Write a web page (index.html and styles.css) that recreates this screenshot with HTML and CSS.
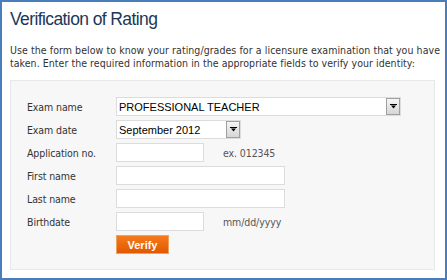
FILE: index.html
```html
<!DOCTYPE html>
<html>
<head>
<meta charset="utf-8">
<title>Verification of Rating</title>
<link rel="stylesheet" href="styles.css">
</head>
<body>
<div class="frame">
  <h1 class="title">Verification of Rating</h1>
  <p class="desc">Use the form below to know your rating/grades for a licensure examination that you have taken. Enter the required information in the appropriate fields to verify your identity:</p>
  <div class="formbox">
    <div class="grid">
      <div class="label">Exam name</div>
      <div class="ctrl">
        <div class="select select-wide">
          <span class="sel-text">PROFESSIONAL TEACHER</span>
          <span class="sel-btn"><svg width="7" height="5" viewBox="0 0 7 5"><path d="M0 0h7v1H0z M1 1.5h5L3.5 4.5z" fill="#000"/></svg></span>
        </div>
      </div>
      <div class="label">Exam date</div>
      <div class="ctrl">
        <div class="select select-date">
          <span class="sel-text">September 2012</span>
          <span class="sel-btn"><svg width="7" height="5" viewBox="0 0 7 5"><path d="M0 0h7v1H0z M1 1.5h5L3.5 4.5z" fill="#000"/></svg></span>
        </div>
      </div>
      <div class="label">Application no.</div>
      <div class="ctrl">
        <div class="input input-short"></div>
        <span class="hint">ex. 012345</span>
      </div>
      <div class="label">First name</div>
      <div class="ctrl"><div class="input input-long"></div></div>
      <div class="label">Last name</div>
      <div class="ctrl"><div class="input input-long"></div></div>
      <div class="label">Birthdate</div>
      <div class="ctrl">
        <div class="input input-short"></div>
        <span class="hint">mm/dd/yyyy</span>
      </div>
      <div class="label"></div>
      <div class="ctrl"><button class="btn">Verify</button></div>
    </div>
  </div>
</div>
</body>
</html>
```
FILE: styles.css
```css
html, body {
  margin: 0;
  padding: 0;
  background: #fff;
}
.frame {
  width: 447px;
  height: 280px;
  box-sizing: border-box;
  border: 2px solid #4a7ebb;
  padding: 5px 0 0 8px;
  font-family: "DejaVu Sans Condensed", "DejaVu Sans", sans-serif;
  font-stretch: condensed;
  color: #333;
  overflow: hidden;
}
.title {
  margin: 0;
  font-family: "Liberation Sans", Arial, sans-serif;
  font-stretch: normal;
  font-size: 17.5px;
  line-height: 24px;
  font-weight: normal;
  letter-spacing: -0.6px;
  color: #1b3858;
  white-space: nowrap;
}
.desc {
  margin: 13px 0 0;
  width: 430px;
  font-size: 10.5px;
  line-height: 13px;
  letter-spacing: 0.05px;
  text-align: justify;
  color: #333;
}
.formbox {
  margin-top: 10px;
  width: 425px;
  height: 190px;
  box-sizing: border-box;
  background: #f7f7f7;
  border: 1px solid #e8e8e8;
  padding: 16px 0 0 16px;
}
.grid {
  display: grid;
  grid-template-columns: 89px auto;
  grid-auto-rows: 19px;
  row-gap: 4px;
}
.label {
  display: flex;
  align-items: center;
  font-size: 10.5px;
  letter-spacing: -0.1px;
  color: #333;
  white-space: nowrap;
}
.ctrl {
  display: flex;
  align-items: center;
  gap: 19px;
}
.select {
  height: 19px;
  box-sizing: border-box;
  background: #fff;
  border: 1px solid #dcdcdc;
  display: flex;
  align-items: center;
  justify-content: space-between;
  padding: 0 0 0 2px;
}
.select-wide { width: 285px; }
.select-date { width: 125px; }
.sel-text {
  font-family: "Liberation Sans", Arial, sans-serif;
  font-stretch: normal;
  font-size: 11px;
  color: #000;
  white-space: nowrap;
}
.sel-btn {
  width: 14px;
  height: 17px;
  box-sizing: border-box;
  border: 1px solid #a0a0a0;
  background: linear-gradient(#f6f6f6, #d6d6d6);
  display: flex;
  align-items: center;
  justify-content: center;
}
.sel-btn svg { display: block; }
.input {
  height: 19px;
  box-sizing: border-box;
  background: #fff;
  border: 1px solid #dcdcdc;
}
.input-short { width: 88px; }
.input-long { width: 169px; }
.hint {
  font-size: 10.5px;
  letter-spacing: -0.1px;
  color: #555;
  white-space: nowrap;
}
.btn {
  width: 53px;
  height: 19px;
  box-sizing: border-box;
  margin: 0;
  padding: 0;
  border: 1px solid #f2a060;
  background: linear-gradient(#f57a1c, #e25800);
  color: #fff;
  font-family: "Liberation Sans", Arial, sans-serif;
  font-weight: bold;
  font-size: 11px;
  cursor: pointer;
}
```
